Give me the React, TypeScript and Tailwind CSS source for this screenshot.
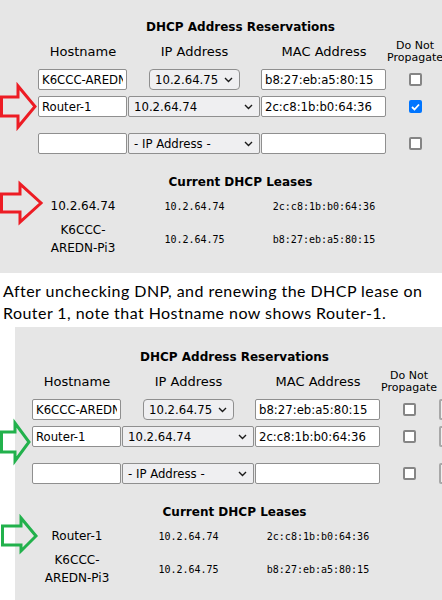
type Reservation = {
  host: string
  ip: string
  mac: string
  dnp: boolean
  compact: boolean
}

type Lease = {
  host: string[]
  ip: string
  mac: string
}

type PanelProps = {
  reservations: Reservation[]
  leases: Lease[]
  className: string
  innerClassName: string
}

const before: Reservation[] = [
  { host: 'K6CCC-AREDN-Pi3', ip: '10.2.64.75', mac: 'b8:27:eb:a5:80:15', dnp: false, compact: true },
  { host: 'Router-1', ip: '10.2.64.74', mac: '2c:c8:1b:b0:64:36', dnp: true, compact: false },
]

const after: Reservation[] = [
  { host: 'K6CCC-AREDN-Pi3', ip: '10.2.64.75', mac: 'b8:27:eb:a5:80:15', dnp: false, compact: true },
  { host: 'Router-1', ip: '10.2.64.74', mac: '2c:c8:1b:b0:64:36', dnp: false, compact: false },
]

const leasesBefore: Lease[] = [
  { host: ['10.2.64.74'], ip: '10.2.64.74', mac: '2c:c8:1b:b0:64:36' },
  { host: ['K6CCC-', 'AREDN-Pi3'], ip: '10.2.64.75', mac: 'b8:27:eb:a5:80:15' },
]

const leasesAfter: Lease[] = [
  { host: ['Router-1'], ip: '10.2.64.74', mac: '2c:c8:1b:b0:64:36' },
  { host: ['K6CCC-', 'AREDN-Pi3'], ip: '10.2.64.75', mac: 'b8:27:eb:a5:80:15' },
]

function Chevron() {
  return (
    <svg width="9" height="6" viewBox="0 0 9 6" className="shrink-0">
      <polyline points="1,1 4.5,4.5 8,1" fill="none" stroke="#1a1a1a" strokeWidth="1.4" />
    </svg>
  )
}

function TextBox({ value, wide }: { value: string; wide?: boolean }) {
  return (
    <input
      readOnly
      value={value}
      className={`h-[21px] ${wide ? 'w-[125px]' : 'w-[89px]'} rounded-[2px] border border-[#8f8f8f] bg-white px-[3px] text-[13px] text-black font-['DejaVu_Sans_Condensed','DejaVu_Sans',sans-serif] outline-none`}
    />
  )
}

function FakeSelect({ value, compact }: { value: string; compact: boolean }) {
  return (
    <div
      className={`flex h-[21px] items-center justify-between border border-[#8f8f8f] bg-[#efeff1] pl-[5px] pr-[6px] text-[13px] text-black font-['DejaVu_Sans_Condensed','DejaVu_Sans',sans-serif] ${
        compact ? 'mx-auto w-[91px] rounded-[4px]' : 'w-[132px] rounded-[2px]'
      }`}
    >
      <span className="whitespace-nowrap">{value}</span>
      <Chevron />
    </div>
  )
}

function CheckBox({ checked }: { checked: boolean }) {
  if (checked) {
    return (
      <span className="mx-auto flex h-[13px] w-[13px] items-center justify-center rounded-[2px] bg-[#0075ff]">
        <svg width="9" height="8" viewBox="0 0 9 8">
          <polyline points="1,4 3.5,6.5 8,1.5" fill="none" stroke="#fff" strokeWidth="1.8" />
        </svg>
      </span>
    )
  }
  return <span className="mx-auto block h-[13px] w-[13px] rounded-[2px] border-2 border-[#858585] bg-white" />
}

function EdgeButton() {
  // next column, only its left edge is in view
  return <span className="ml-[2px] block h-[21px] w-[30px] rounded-[2px] border-2 border-[#a8a8a8] bg-[#efefef]" />
}

function Panel({ reservations, leases, className, innerClassName }: PanelProps) {
  return (
    <div className={`overflow-hidden bg-[#e6e6e6] text-black font-['DejaVu_Sans',Verdana,sans-serif] ${className}`}>
      <div className={innerClassName}>
        <div className="pt-[20px]">
          <div className="h-[20px] w-[405px] text-center text-[12px] font-bold leading-[20px]">DHCP Address Reservations</div>

          <div className="grid h-[30px] grid-cols-[90px_133px_126px_56px_30px] items-center text-center text-[13px]">
            <div>Hostname</div>
            <div>IP Address</div>
            <div>MAC Address</div>
            <div className="whitespace-nowrap text-[11px] leading-[12px]">
              Do Not
              <br />
              Propagate
            </div>
            <div />
          </div>

          {reservations.map((r, i) => (
            <div
              key={r.mac}
              className={`grid h-[21px] grid-cols-[90px_133px_126px_56px_30px] items-center ${i === 0 ? 'mt-[2px]' : 'mt-[6px]'}`}
            >
              <TextBox value={r.host} />
              <FakeSelect value={r.ip} compact={r.compact} />
              <TextBox value={r.mac} wide />
              <CheckBox checked={r.dnp} />
              <EdgeButton />
            </div>
          ))}

          <div className="mt-[16px] grid h-[21px] grid-cols-[90px_133px_126px_56px_30px] items-center">
            <TextBox value="" />
            <FakeSelect value="- IP Address -" compact={false} />
            <TextBox value="" wide />
            <CheckBox checked={false} />
            <EdgeButton />
          </div>

          <div className="mt-[18px] h-[20px] w-[405px] text-center text-[12px] font-bold leading-[20px]">Current DHCP Leases</div>

          {leases.map((l, i) => (
            <div
              key={l.mac}
              className={`grid grid-cols-[90px_133px_126px] items-center text-center ${i === 0 ? 'mt-[4px] h-[20px]' : 'mt-[5px] h-[36px]'}`}
            >
              <div className="text-[12px] leading-[18px]">
                {l.host.map((line) => (
                  <div key={line}>{line}</div>
                ))}
              </div>
              <div className="text-[10px] font-['DejaVu_Sans_Mono',monospace]">{l.ip}</div>
              <div className="text-[10px] font-['DejaVu_Sans_Mono',monospace]">{l.mac}</div>
            </div>
          ))}
        </div>
      </div>
    </div>
  )
}

function Arrow({ color, points, className }: { color: string; points: string; className: string }) {
  return (
    <svg className={`pointer-events-none absolute left-0 top-0 ${className}`} width="60" height="60" viewBox="0 0 60 60">
      <polygon points={points} fill="none" stroke={color} strokeWidth="3" strokeLinejoin="miter" />
    </svg>
  )
}

export default function App() {
  return (
    <div className="relative h-[600px] w-[442px] overflow-hidden bg-white">
      <Panel
        reservations={before}
        leases={leasesBefore}
        className="h-[273px]"
        innerClassName="-mt-[3px] pl-[38px]"
      />

      <p className="h-[54px] whitespace-nowrap pl-[3px] pt-[7px] text-[16px] leading-[22px] tracking-[0.45px] text-black font-['Lato','Open_Sans',sans-serif]">
        After unchecking DNP, and renewing the DHCP lease on
        <br />
        Router 1, note that Hostname now shows Router-1.
      </p>

      <Panel
        reservations={after}
        leases={leasesAfter}
        className="ml-[15px] h-[273px]"
        innerClassName="pl-[17px]"
      />

      {/* annotation arrows */}
      <Arrow color="#ed1c24" className="translate-y-[76px]" points="1.5,21 18,21 18,10 35,30.5 18,51 18,40 1.5,40" />
      <Arrow color="#ed1c24" className="translate-y-[173px]" points="1.5,21 20,21 20,11 41,30 20,49 20,39 1.5,39" />
      <Arrow color="#22b14c" className="translate-y-[412px]" points="1.5,20 15,20 15,11 29,30 15,49 15,40 1.5,40" />
      <Arrow color="#22b14c" className="translate-y-[506px]" points="2.5,20 21,20 21,12 36,30 21,45 21,39 2.5,39" />
    </div>
  )
}
